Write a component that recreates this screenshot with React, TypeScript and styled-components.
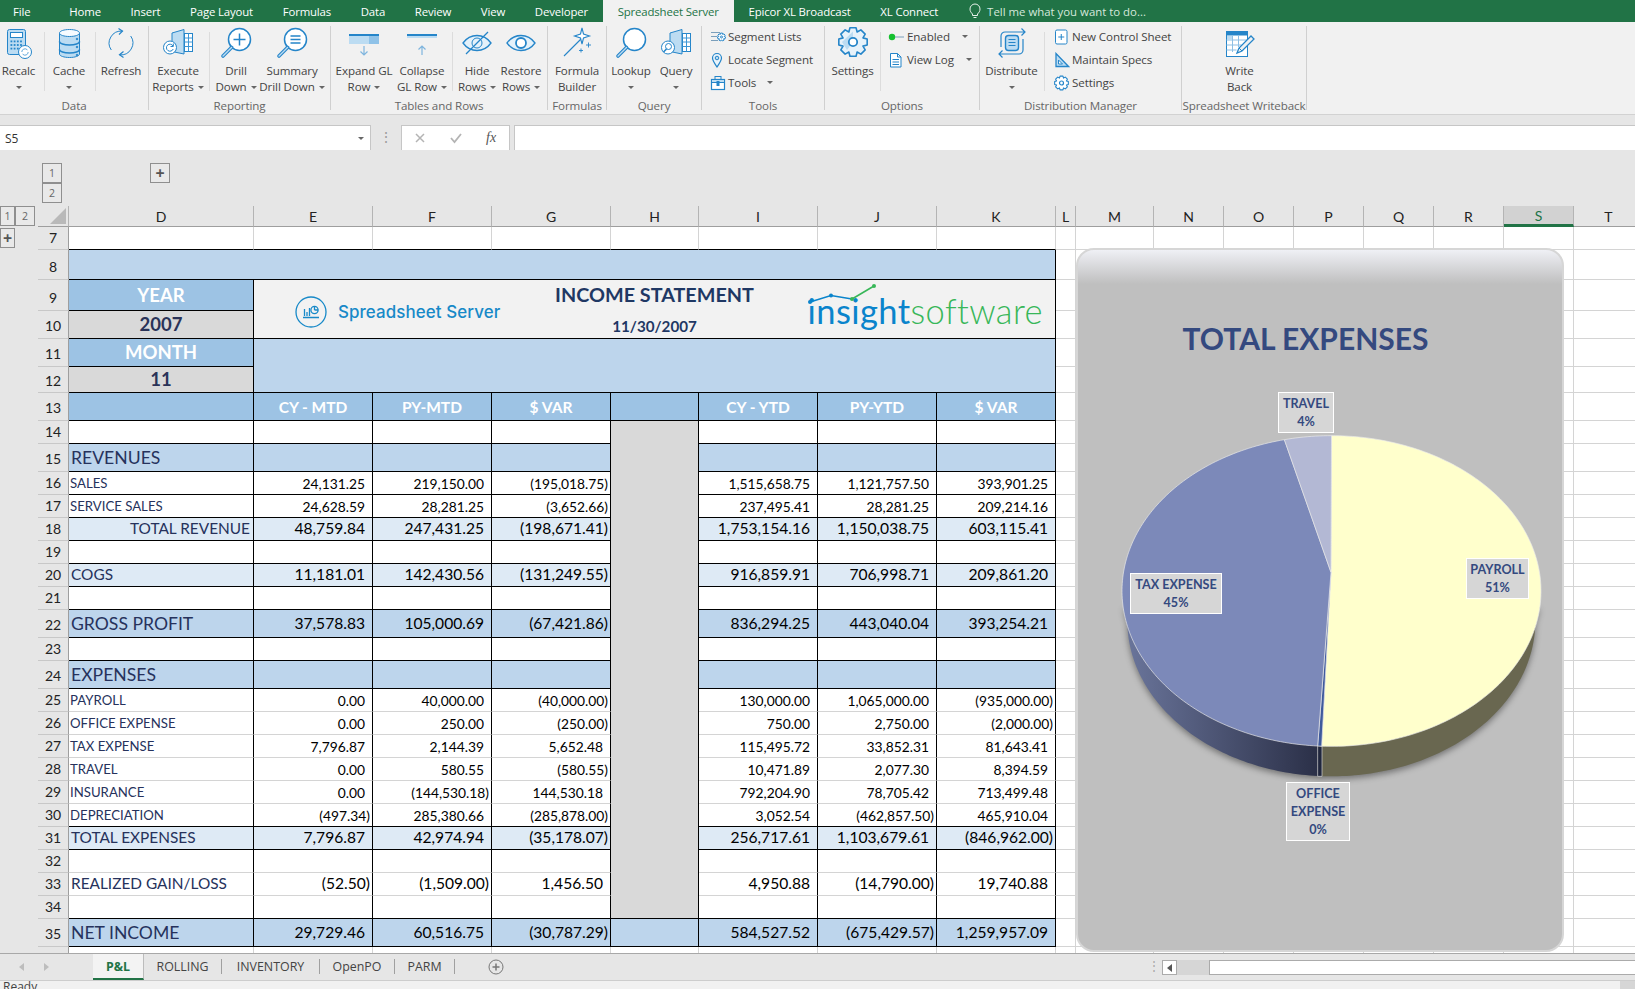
import React, { FC, ReactNode } from "react";
import styled, { createGlobalStyle } from "styled-components";

const BLUE = "#2585c9";
const PALE = "#bcdcf2";
const UI_FONT = `"Open Sans", "Noto Sans", sans-serif`;
const SHEET_FONT = `Lato, "Liberation Sans", sans-serif`;

const GlobalStyle = createGlobalStyle`
  html, body { margin: 0; padding: 0; background: #e6e6e6; overflow: hidden; }
`;

const Page = styled.div`
  width: 1635px;
  height: 989px;
  display: flex;
  flex-direction: column;
  overflow: hidden;
  font-family: ${UI_FONT};
`;

/* ---------- title tabs ---------- */

const TabStrip = styled.div`
  height: 22px;
  flex: none;
  display: flex;
  background: #217346;
  color: #fff;
  font-size: 11.4px;
  letter-spacing: -0.15px;
`;

const MenuTab = styled.div<{ $active?: boolean; $wide?: boolean }>`
  display: flex;
  align-items: center;
  padding: ${(p) => (p.$wide ? "0 24px 0 13px" : "0 14.85px")};
  white-space: nowrap;
  background: ${(p) => (p.$active ? "#f1f1f1" : "transparent")};
  color: ${(p) => (p.$active ? "#217346" : "#fff")};
`;

const TellMe = styled.div`
  display: flex;
  align-items: center;
  gap: 6px;
  margin-left: 16px;
  color: #d5e8dc;
  white-space: nowrap;
  letter-spacing: 0;
`;

/* ---------- ribbon ---------- */

const Ribbon = styled.div`
  height: 92px;
  flex: none;
  display: flex;
  background: #f1f1f1;
  border-bottom: 1px solid #d2d2d2;
  color: #444;
  font-size: 11.6px;
  letter-spacing: -0.1px;
`;

const Group = styled.div<{ $w: number }>`
  width: ${(p) => p.$w}px;
  flex: none;
  display: flex;
  flex-direction: column;
`;

const GroupBody = styled.div<{ $pad?: number }>`
  flex: 1;
  display: flex;
  padding-left: ${(p) => p.$pad ?? 0}px;
  min-height: 0;
`;

const GroupLabel = styled.div`
  height: 16px;
  line-height: 16px;
  text-align: center;
  color: #666;
  white-space: nowrap;
`;

const GroupRule = styled.div`
  width: 1px;
  flex: none;
  margin: 4px 0;
  background: #d0d0d0;
`;

const InnerRule = styled.div<{ $ml?: number }>`
  width: 1px;
  flex: none;
  margin: 10px 0 7px ${(p) => p.$ml ?? 0}px;
  background: #dcdcdc;
`;

const BigBtn = styled.div<{ $w: number }>`
  width: ${(p) => p.$w}px;
  flex: none;
  display: flex;
  flex-direction: column;
  align-items: center;
  padding-top: 5px;
`;

const IconBox = styled.div`
  height: 32px;
  width: 32px;
  margin-bottom: 4px;
`;

const BtnLine = styled.div`
  height: 16px;
  line-height: 16px;
  white-space: nowrap;
  display: flex;
  align-items: center;
  justify-content: center;
`;

const Caret = styled.span<{ $ml?: number }>`
  display: inline-block;
  width: 0;
  height: 0;
  margin-left: ${(p) => p.$ml ?? 4}px;
  border-left: 3px solid transparent;
  border-right: 3px solid transparent;
  border-top: 3px solid #666;
`;

const SmallList = styled.div<{ $ml?: number }>`
  display: flex;
  flex-direction: column;
  padding-top: 3px;
  margin-left: ${(p) => p.$ml ?? 0}px;
`;

const SmallRow = styled.div`
  height: 23px;
  display: flex;
  align-items: center;
  white-space: nowrap;
`;

const SmallIcon = styled.div<{ $w?: number }>`
  width: ${(p) => p.$w ?? 18}px;
  height: 16px;
  flex: none;
`;

/* ---------- formula bar ---------- */

const FormulaBar = styled.div`
  height: 35px;
  flex: none;
  box-sizing: border-box;
  padding-top: 10px;
  display: flex;
  background: #e6e6e6;
  font-size: 12px;
  color: #333;
`;

const NameBox = styled.div`
  width: 371px;
  height: 26px;
  flex: none;
  box-sizing: border-box;
  display: flex;
  align-items: center;
  justify-content: space-between;
  padding: 0 6px 0 5px;
  background: #fff;
  border: 1px solid #c6c6c6;
  border-left: none;
`;

const BarDots = styled.div`
  width: 30px;
  flex: none;
  color: #9c9c9c;
  text-align: center;
  line-height: 24px;
  font-size: 14px;
`;

const FxButtons = styled.div`
  width: 109px;
  height: 26px;
  flex: none;
  box-sizing: border-box;
  display: flex;
  align-items: center;
  gap: 23px;
  padding-left: 12px;
  background: #fff;
  border: 1px solid #c6c6c6;
`;

const FormulaInput = styled.div`
  flex: 1;
  height: 26px;
  box-sizing: border-box;
  margin-left: 4px;
  background: #fff;
  border: 1px solid #c6c6c6;
  border-right: none;
`;

const FxGlyph = styled.span`
  font-family: "Liberation Serif", serif;
  font-style: italic;
  font-size: 14px;
  color: #555;
`;

const OutlineBand = styled.div`
  height: 56px;
  flex: none;
  box-sizing: border-box;
  padding: 13px 0 0 42px;
  display: flex;
  align-items: flex-start;
  background: #e6e6e6;
`;

const LevelStack = styled.div`
  display: flex;
  flex-direction: column;
  margin-right: 88px;
`;

const LevelBtn = styled.div<{ $w?: number; $plus?: boolean }>`
  width: ${(p) => p.$w ?? 20}px;
  height: 20px;
  box-sizing: border-box;
  display: flex;
  align-items: center;
  justify-content: center;
  border: 1px solid #8f8f8f;
  color: ${(p) => (p.$plus ? "#555" : "#666")};
  font-size: ${(p) => (p.$plus ? "16px" : "10.5px")};
  font-weight: ${(p) => (p.$plus ? 700 : 400)};
  background: #e9e9e9;
`;

/* ---------- sheet ---------- */

const SheetArea = styled.div`
  position: relative;
  flex: 1;
  min-height: 0;
  display: flex;
  overflow: hidden;
  background: #fff;
`;

const Gutter = styled.div`
  width: 38px;
  flex: none;
  background: #e6e6e6;
`;

const LevelRow = styled.div`
  display: flex;
  margin-bottom: 2px;
`;

const COLUMNS = ["D", "E", "F", "G", "H", "I", "J", "K", "L", "M", "N", "O", "P", "Q", "R", "S", "T"];
const WIDTHS = [185, 119, 119, 119, 88, 119, 119, 119, 20, 78, 70, 70, 70, 70, 70, 70, 70];

const Grid = styled.div`
  display: grid;
  grid-template-columns: 31px ${WIDTHS.map((w) => `${w}px`).join(" ")};
  grid-auto-rows: min-content;
  font-family: ${SHEET_FONT};
  color: #000;
  align-content: start;
`;

const ColHead = styled.div<{ $selected?: boolean }>`
  height: 21px;
  box-sizing: border-box;
  display: flex;
  align-items: center;
  justify-content: center;
  background: ${(p) => (p.$selected ? "#d2d2d2" : "#e6e6e6")};
  color: ${(p) => (p.$selected ? "#217346" : "#222")};
  border-right: 1px solid #b4b4b4;
  border-bottom: ${(p) => (p.$selected ? "3px solid #217346" : "1px solid #9e9e9e")};
  font-size: 14px;
`;

const Corner = styled.div`
  height: 21px;
  box-sizing: border-box;
  background: #e6e6e6;
  border-right: 1px solid #b4b4b4;
  border-bottom: 1px solid #9e9e9e;
  display: flex;
  align-items: flex-end;
  justify-content: flex-end;
  padding: 0 2px 2px 0;
`;

const RowHead = styled.div<{ $h: number }>`
  height: ${(p) => p.$h}px;
  box-sizing: border-box;
  display: flex;
  align-items: flex-end;
  justify-content: center;
  padding-bottom: ${(p) => (p.$h >= 28 ? 5 : 4)}px;
  background: #e6e6e6;
  border-right: 1px solid #9e9e9e;
  border-bottom: 1px solid #c8c8c8;
  color: #222;
  font-size: 14px;
  line-height: 1;
`;

const Cell = styled.div<{
  $fill?: string;
  $bottom?: string;
  $right?: string;
  $span?: number;
  $rows?: number;
}>`
  box-sizing: border-box;
  min-width: 0;
  display: flex;
  align-items: flex-end;
  white-space: nowrap;
  line-height: 1;
  background: ${(p) => p.$fill ?? "#fff"};
  border-right: 1px solid ${(p) => p.$right ?? "#000"};
  border-bottom: 1px solid ${(p) => p.$bottom ?? "#000"};
  grid-column: span ${(p) => p.$span ?? 1};
  grid-row: span ${(p) => p.$rows ?? 1};
`;

const BandCell = styled(Cell)`
  justify-content: center;
  align-items: center;
  font-weight: 700;
`;

const HeadCell = styled(BandCell)`
  color: #fff;
  font-size: 15.5px;
  padding-top: 2px;
`;

const YearLabel = styled(BandCell)`
  color: #fff;
  font-size: 18.5px;
`;

const YearValue = styled(BandCell)`
  color: #2a3358;
  font-size: 18.5px;
`;

const LabelCell = styled(Cell)<{ $size: number; $alignRight?: boolean }>`
  font-size: ${(p) => p.$size}px;
  color: #26325c;
  padding: 0 3px 4px ${(p) => (p.$size > 14 ? 2 : 1)}px;
  justify-content: ${(p) => (p.$alignRight ? "flex-end" : "flex-start")};
`;

const NumberCell = styled(Cell)<{ $big?: boolean; $paren?: boolean; $tall?: boolean }>`
  font-size: ${(p) => (p.$big ? 15.6 : 13.8)}px;
  padding: 0 ${(p) => (p.$paren ? 2 : 7)}px ${(p) => (p.$tall ? 5 : 3)}px 0;
  justify-content: flex-end;
  font-variant-numeric: tabular-nums;
`;

const Banner = styled(Cell)`
  display: grid;
  grid-template-columns: 1fr auto 1fr;
  align-items: stretch;
`;

const TitleBlock = styled.div`
  height: 58px;
  display: flex;
  flex-direction: column;
  align-items: center;
  color: #1f3864;
  font-weight: 700;
`;

const Title = styled.div`
  font-size: 19.8px;
  line-height: 29px;
`;

const DateLine = styled.div`
  font-size: 15.2px;
  line-height: 34px;
`;

const ServerBrand = styled.div`
  display: flex;
  align-items: center;
  gap: 11px;
  padding: 6px 0 0 41px;
  color: #1789c8;
  font-family: Inter, sans-serif;
  font-size: 16.9px;
  font-weight: 500;
  letter-spacing: 0.1px;
`;

const InsightBrand = styled.div`
  position: relative;
  justify-self: end;
  padding: 15px 12px 0 0;
  font-family: ${SHEET_FONT};
  font-size: 34.5px;
  line-height: 32px;
  letter-spacing: 0.4px;
`;

const InsightWord = styled.span`
  color: #0a84cc;
  font-weight: 400;
`;

const SoftwareWord = styled.span`
  color: #38b759;
  font-weight: 300;
`;

const InsightTrend = styled.svg`
  position: absolute;
  left: 0;
  top: 4px;
`;

/* ---------- chart ---------- */

const ChartPanel = styled.div`
  position: absolute;
  left: 1076px;
  top: 42px;
  width: 488px;
  height: 704px;
  box-sizing: border-box;
  border: 2px solid #d6d6d6;
  border-radius: 18px;
  background: linear-gradient(#eff0f5 0, #bfbfbf 34px);
  font-family: ${SHEET_FONT};
`;

const ChartTitle = styled.div`
  padding-top: 70px;
  text-align: center;
  margin-right: 29px;
  color: #34497f;
  font-size: 30px;
  line-height: 36px;
  font-weight: 700;
`;

const PieSvg = styled.svg`
  position: absolute;
  left: 22px;
  top: 179px;
`;

const DataLabel = styled.div<{ $x: number; $y: number; $w: number; $h: number }>`
  position: absolute;
  left: ${(p) => p.$x}px;
  top: ${(p) => p.$y}px;
  width: ${(p) => p.$w}px;
  height: ${(p) => p.$h}px;
  box-sizing: border-box;
  display: flex;
  align-items: center;
  justify-content: center;
  text-align: center;
  background: #d6d6d6;
  border: 1px solid #fff;
  color: #34497f;
  font-size: 12.6px;
  font-weight: 700;
  line-height: 18px;
`;

/* ---------- sheet tabs + status ---------- */

const SheetTabs = styled.div`
  height: 28px;
  flex: none;
  box-sizing: border-box;
  display: flex;
  align-items: stretch;
  background: #e6e6e6;
  border-top: 1px solid #a8a8a8;
  border-bottom: 1px solid #cdcdcd;
  font-size: 12.4px;
  color: #444;
`;

const TabNav = styled.div`
  width: 93px;
  flex: none;
  display: flex;
  align-items: center;
  gap: 20px;
  padding-left: 19px;
  box-sizing: border-box;
`;

const NavArrow = styled.span<{ $dir: "left" | "right" }>`
  width: 0;
  height: 0;
  border-top: 4px solid transparent;
  border-bottom: 4px solid transparent;
  border-${(p) => (p.$dir === "left" ? "right" : "left")}: 5px solid #bdbdbd;
`;

const SheetTab = styled.div<{ $active?: boolean; $w: number }>`
  width: ${(p) => p.$w}px;
  flex: none;
  box-sizing: border-box;
  display: flex;
  align-items: center;
  justify-content: center;
  background: ${(p) => (p.$active ? "#f3f3f3" : "transparent")};
  color: ${(p) => (p.$active ? "#217346" : "#444")};
  font-weight: ${(p) => (p.$active ? 700 : 400)};
  border-bottom: ${(p) => (p.$active ? "2px solid #217346" : "none")};
  margin: ${(p) => (p.$active ? "0" : "5px 0 6px")};
  border-right: ${(p) => (p.$active ? "1px solid #bcbcbc" : "1px solid #a0a0a0")};
`;

const AddSheet = styled.div`
  margin-left: 33px;
  align-self: center;
  display: flex;
`;

const TabFiller = styled.div`
  flex: 1;
`;

const ScrollDots = styled.div`
  width: 16px;
  flex: none;
  text-align: center;
  color: #a8a8a8;
  line-height: 24px;
`;

const HScroll = styled.div`
  flex: none;
  width: 473px;
  height: 15px;
  margin-top: 6px;
  display: flex;
  box-sizing: border-box;
`;

const HScrollBtn = styled.div`
  width: 15px;
  flex: none;
  box-sizing: border-box;
  background: #fff;
  border: 1px solid #ababab;
  display: flex;
  align-items: center;
  justify-content: center;
`;

const HScrollTrack = styled.div`
  width: 32px;
  flex: none;
  background: #d6d6d6;
`;

const HScrollThumb = styled.div`
  flex: 1;
  box-sizing: border-box;
  background: #fff;
  border: 1px solid #ababab;
  border-right: none;
`;

const StatusBar = styled.div`
  height: 8px;
  flex: none;
  display: flex;
  justify-content: space-between;
  padding-left: 3px;
  background: #f1f1f1;
  color: #444;
  font-size: 12px;
  line-height: 12px;
  overflow: hidden;
`;

const StatusBox = styled.div`
  width: 15px;
  background: #d6d6d6;
`;

/* ---------- icons ---------- */

const Svg: FC<{ children: ReactNode; size?: number; box?: number }> = ({ children, size = 32, box = 32 }) => (
  <svg width={size} height={size} viewBox={`0 0 ${box} ${box}`} fill="none" stroke={BLUE} strokeWidth={1}>
    {children}
  </svg>
);

const gearPath = (cx: number, cy: number, outer: number, inner: number, teeth: number) => {
  const pts: string[] = [];
  const step = (Math.PI * 2) / teeth;
  for (let i = 0; i < teeth; i++) {
    const a = i * step - Math.PI / 2;
    [
      [inner, -0.5],
      [outer, -0.27],
      [outer, 0.27],
      [inner, 0.5],
    ].forEach(([r, k]) => {
      const t = a + k * step;
      pts.push(`${(cx + r * Math.cos(t)).toFixed(2)},${(cy + r * Math.sin(t)).toFixed(2)}`);
    });
  }
  return `M${pts.join("L")}Z`;
};

const CalcIcon = () => (
  <Svg>
    <rect x="4.5" y="2.5" width="18" height="25" rx="2" fill={PALE} />
    <rect x="7.5" y="5.5" width="12" height="5" fill="#fff" />
    {[0, 1, 2].map((r) =>
      [0, 1, 2, 3].map((c) => (
        <rect key={`${r}${c}`} x={7.5 + c * 3.2} y={13.5 + r * 3.6} width="1.8" height="1.8" fill={BLUE} stroke="none" />
      ))
    )}
    <circle cx="22" cy="25" r="6.5" fill="#fff" />
    <path d="M18.8 25a3.2 3.2 0 0 1 5.6-2.1M25.2 25a3.2 3.2 0 0 1-5.6 2.1" stroke="#62a8db" />
  </Svg>
);

const CacheIcon = () => (
  <Svg>
    <path d="M6.5 6v21c0 2 4.500 3.500 10 3.500s10-1.500 10-3.500V6" fill={PALE} />
    <path d="M6.500 6c0 2 4.500 3.500 10 3.500S26.500 8 26.500 6 22 2.500 16.500 2.500 6.500 4 6.500 6z" fill="#f6fbff" />
    <path d="M6.500 14.500c0 2 4.500 3.500 10 3.500s10-1.500 10-3.500M6.500 22.500c0 2 4.500 3.500 10 3.500s10-1.500 10-3.500" strokeWidth="1.6" />
    <circle cx="24" cy="12" r=".8" fill={BLUE} />
    <circle cx="24" cy="20" r=".8" fill={BLUE} />
    <circle cx="24" cy="28" r=".8" fill={BLUE} />
  </Svg>
);

const RefreshIcon = () => (
  <Svg>
    <path d="M6.300 23A12 12 0 0 1 17.500 4.200M25.700 9A12 12 0 0 1 14.500 27.800" />
    <path d="M13.500 1.500l4 2.700-3.500 3.300M18.500 24.500l-4 3.300 4 2.700" strokeWidth="1.200" />
  </Svg>
);

const SheetDocIcon = ({ lens }: { lens?: boolean }) => (
  <Svg>
    <path d="M10 6l12-3.500V27l-12-2.500z" fill={PALE} />
    <rect x="22.500" y="6.500" width="8" height="18" fill="#fff" />
    <path d="M22.500 11h8M22.500 15h8M22.500 19.500h8M26.500 6.500v18" stroke="#3d96d6" />
    <circle cx="8" cy="20.500" r="6.500" fill="#fff" />
    {lens ? (
      <>
        <circle cx="8.500" cy="19.500" r="3" />
        <path d="M6.500 22l-3 3" strokeWidth="1.600" />
      </>
    ) : (
      <path d="M11 19a3.500 3.500 0 1 0 .200 3M11.300 16.500V19.500H8.500" />
    )}
  </Svg>
);

const LensIcon = ({ children }: { children?: ReactNode }) => (
  <Svg>
    <circle cx="19.500" cy="12.500" r="11" fill="#fff" strokeWidth="1.500" />
    <path d="M11.500 20.500L3 29" stroke={BLUE} strokeWidth="3.600" strokeLinecap="round" />
    <path d="M11.500 20.500L3 29" stroke={PALE} strokeWidth="1.400" strokeLinecap="round" />
    {children}
  </Svg>
);

const ExpandIcon = () => (
  <Svg>
    <rect x="1" y="8" width="30" height="9" fill={PALE} stroke="none" />
    <rect x="21" y="9" width="10" height="8" fill="#8fc2e8" stroke="none" />
    <rect x="1" y="7" width="30" height="2" fill={BLUE} stroke="none" />
    <path d="M16 19v9M12.500 24.500L16 28l3.500-3.500" stroke="#7fb5de" strokeWidth="1.200" />
  </Svg>
);

const CollapseIcon = () => (
  <Svg>
    <rect x="1" y="9" width="30" height="2" fill={PALE} stroke="none" />
    <rect x="1" y="7" width="30" height="2" fill={BLUE} stroke="none" />
    <path d="M16 19v9M12.500 22.500L16 19l3.500 3.500" stroke="#7fb5de" strokeWidth="1.200" />
  </Svg>
);

const EyeIcon = ({ slash }: { slash?: boolean }) => (
  <Svg>
    <path d="M2 16C6 10.500 11 8.500 16 8.500S26 10.500 30 16c-4 5.500-9 7.500-14 7.500S6 21.500 2 16z" fill="#e4f1fa" strokeWidth="1.300" />
    <circle cx="16" cy="16" r="5" fill={slash ? "#e4f1fa" : "#fff"} strokeWidth={slash ? 1 : 1.800} />
    {slash && <path d="M27 5L5 27" strokeWidth="1.300" />}
  </Svg>
);

const WandIcon = () => (
  <Svg>
    <path d="M3 29L21 11" strokeWidth="1.100" />
    <path d="M21 1l1.500 6 6 2-6 2-1.500 6-1.500-6-6-2 6-2z" fill="#fff" strokeWidth="1.100" />
    <path d="M27.500 15.500v5M25 18h5M20 21.500v4M18 23.500h4" strokeWidth=".9" />
  </Svg>
);

const GearIcon = () => (
  <Svg>
    <path d={gearPath(16, 15, 14.500, 10.800, 8)} fill="#e7f2fa" strokeWidth="1.600" strokeLinejoin="round" />
    <path d="M16 4.500L5 15l5 8 6-8z" fill={PALE} stroke="none" />
    <circle cx="16" cy="15" r="4.200" fill="#fff" strokeWidth="1.800" />
  </Svg>
);

const DistributeIcon = () => (
  <Svg>
    <rect x="9.500" y="8.500" width="13" height="15" rx="3" fill={PALE} strokeWidth="1.400" />
    <path d="M12.500 12.500h7M12.500 15.500h7M12.500 18.500h7" strokeWidth="1.200" />
    <path d="M5 20V9a4 4 0 0 1 4-4h20M25.500 1.500L29 5l-3.500 3.500" strokeWidth="1.200" />
    <path d="M27 12v11a4 4 0 0 1-4 4H3M6.500 30.500L3 27l3.500-3.500" strokeWidth="1.200" />
  </Svg>
);

const WriteBackIcon = () => (
  <Svg>
    <rect x="2.500" y="4.500" width="21" height="25" fill="#fff" />
    <rect x="2" y="4" width="22" height="4.500" fill={BLUE} stroke="none" />
    <path d="M2.500 13h21M2.500 18h15M2.500 23h10M8.500 8.500V25M14.500 8.500V20" stroke="#8dbfe4" />
    <rect x="3" y="9" width="5" height="4" fill={PALE} stroke="none" />
    <path d="M13 26l2-5L27 9l3 3-12 12z" fill="#f1f1f1" strokeWidth="1.300" />
    <path d="M15 21l3 3" strokeWidth="1" />
  </Svg>
);

const SegListIcon = () => (
  <Svg size={16} box={16}>
    <path d="M1 3.500h9M1 7.500h6M1 11.500h7" stroke="#7b9fbb" />
    <path d={gearPath(11.500, 8, 4, 2.800, 7)} fill="#fff" />
    <circle cx="11.500" cy="8" r="1" />
  </Svg>
);

const PinIcon = () => (
  <Svg size={16} box={16}>
    <path d="M7 15C4 10.500 2.500 8.500 2.500 6a4.500 4.500 0 0 1 9 0c0 2.500-1.500 4.500-4.500 9z" fill="#eaf4fb" strokeWidth="1.200" />
    <circle cx="7" cy="6" r="1.800" fill={PALE} />
  </Svg>
);

const ToolsIcon = () => (
  <Svg size={16} box={16}>
    <rect x="1.500" y="4.500" width="13" height="10" fill="#fff" strokeWidth="1.200" />
    <rect x="5" y="1.500" width="6" height="3" />
    <rect x="1.500" y="4.500" width="13" height="3" fill={PALE} />
    <rect x="6.500" y="6" width="3" height="5" fill={BLUE} stroke="none" />
  </Svg>
);

const EnabledIcon = () => (
  <Svg size={16} box={16}>
    <path d="M6 8h10" stroke="#7b9fbb" />
    <circle cx="4" cy="8" r="3.200" fill="#16c02f" stroke="none" />
  </Svg>
);

const LogIcon = () => (
  <Svg size={16} box={16}>
    <path d="M2.500 1.500h7l3.500 3.500v10h-10.500z" fill="#fff" />
    <path d="M9.500 1.500V5H13M4.500 7.500h6.500M4.500 10h6.500M4.500 12.500h6.500" />
  </Svg>
);

const ControlIcon = () => (
  <Svg size={16} box={16}>
    <rect x="1.500" y="1" width="11.500" height="14" rx="1.500" fill="#fff" />
    <path d="M7.250 5v6M4.250 8h6" />
  </Svg>
);

const RulerIcon = () => (
  <Svg size={16} box={16}>
    <path d="M2 1.500v13h12.500z" fill={PALE} strokeWidth="1.300" />
    <path d="M4.500 8v4h4z" fill="#fff" />
  </Svg>
);

const SmallGearIcon = () => (
  <Svg size={16} box={16}>
    <path d={gearPath(7.500, 8, 7, 5.300, 8)} fill="#fff" strokeWidth="1.100" strokeLinejoin="round" />
    <circle cx="7.500" cy="8" r="2" strokeWidth="1.200" />
  </Svg>
);

const BulbIcon = () => (
  <svg width="12" height="16" viewBox="0 0 12 16" fill="none" stroke="#e6f1ea" strokeWidth="1">
    <path d="M3.500 11C2 9.500 1 8.300 1 6a5 5 0 0 1 10 0c0 2.300-1 3.500-2.500 5v1.500h-5z" />
    <path d="M4.500 14.500h3" />
  </svg>
);

const RibbonButton: FC<{
  w: number;
  icon: ReactNode;
  line1: string;
  line2?: string;
  caret?: boolean;
}> = ({ w, icon, line1, line2, caret }) => (
  <BigBtn $w={w}>
    <IconBox>{icon}</IconBox>
    <BtnLine>{line1}</BtnLine>
    <BtnLine>
      {line2}
      {caret && <Caret $ml={line2 ? 4 : 0} />}
    </BtnLine>
  </BigBtn>
);

/* ---------- sheet data ---------- */

type RowKind = "line" | "total" | "section" | "blank" | "plainBig";

interface IRow {
  n: number;
  kind: RowKind;
  label?: string;
  right?: boolean;
  rule?: "grid";
  values?: string[];
}

const ROW_BLUE = "#bdd5ec";
const HEAD_BLUE = "#9dc3e4";
const GREY = "#d9d9d9";
const PALE_ROW = "#deeaf5";
const GRID = "#d4d4d4";

const HEIGHTS: Record<RowKind, number> = { line: 23, blank: 23, plainBig: 23, total: 23, section: 28 };

const rows: IRow[] = [
  { n: 15, kind: "section", label: "REVENUES" },
  { n: 16, kind: "line", label: "SALES", values: ["24,131.25", "219,150.00", "(195,018.75)", "1,515,658.75", "1,121,757.50", "393,901.25"] },
  { n: 17, kind: "line", label: "SERVICE SALES", values: ["24,628.59", "28,281.25", "(3,652.66)", "237,495.41", "28,281.25", "209,214.16"] },
  { n: 18, kind: "total", label: "TOTAL REVENUE", right: true, values: ["48,759.84", "247,431.25", "(198,671.41)", "1,753,154.16", "1,150,038.75", "603,115.41"] },
  { n: 19, kind: "blank" },
  { n: 20, kind: "total", label: "COGS", values: ["11,181.01", "142,430.56", "(131,249.55)", "916,859.91", "706,998.71", "209,861.20"] },
  { n: 21, kind: "blank" },
  { n: 22, kind: "section", label: "GROSS PROFIT", values: ["37,578.83", "105,000.69", "(67,421.86)", "836,294.25", "443,040.04", "393,254.21"] },
  { n: 23, kind: "blank" },
  { n: 24, kind: "section", label: "EXPENSES" },
  { n: 25, kind: "line", rule: "grid", label: "PAYROLL", values: ["0.00", "40,000.00", "(40,000.00)", "130,000.00", "1,065,000.00", "(935,000.00)"] },
  { n: 26, kind: "line", rule: "grid", label: "OFFICE EXPENSE", values: ["0.00", "250.00", "(250.00)", "750.00", "2,750.00", "(2,000.00)"] },
  { n: 27, kind: "line", rule: "grid", label: "TAX EXPENSE", values: ["7,796.87", "2,144.39", "5,652.48", "115,495.72", "33,852.31", "81,643.41"] },
  { n: 28, kind: "line", rule: "grid", label: "TRAVEL", values: ["0.00", "580.55", "(580.55)", "10,471.89", "2,077.30", "8,394.59"] },
  { n: 29, kind: "line", rule: "grid", label: "INSURANCE", values: ["0.00", "(144,530.18)", "144,530.18", "792,204.90", "78,705.42", "713,499.48"] },
  { n: 30, kind: "line", label: "DEPRECIATION", values: ["(497.34)", "285,380.66", "(285,878.00)", "3,052.54", "(462,857.50)", "465,910.04"] },
  { n: 31, kind: "total", label: "TOTAL EXPENSES", values: ["7,796.87", "42,974.94", "(35,178.07)", "256,717.61", "1,103,679.61", "(846,962.00)"] },
  { n: 32, kind: "blank", rule: "grid" },
  { n: 33, kind: "plainBig", rule: "grid", label: "REALIZED GAIN/LOSS", values: ["(52.50)", "(1,509.00)", "1,456.50", "4,950.88", "(14,790.00)", "19,740.88"] },
  { n: 34, kind: "blank" },
  { n: 35, kind: "section", label: "NET INCOME", values: ["29,729.46", "60,516.75", "(30,787.29)", "584,527.52", "(675,429.57)", "1,259,957.09"] },
];

const rowFill = (kind: RowKind) => (kind === "section" ? ROW_BLUE : kind === "total" ? PALE_ROW : "#fff");
const labelSize = (row: IRow) => {
  if (row.kind === "section") return 17.6;
  if (row.kind === "total" || row.kind === "plainBig") return 15.4;
  return 13.2;
};

const Tail: FC<{ n: number }> = ({ n }) => (
  <>
    {COLUMNS.slice(8).map((c) => (
      <Cell key={c + n} $right={GRID} $bottom={GRID} />
    ))}
  </>
);

const BodyRow: FC<{ row: IRow }> = ({ row }) => {
  const fill = rowFill(row.kind);
  const bottom = row.rule === "grid" ? GRID : "#000";
  const big = row.kind !== "line";
  const values = row.values ?? ["", "", "", "", "", ""];
  const numberCell = (v: string, i: number) => (
    <NumberCell key={i} $fill={fill} $bottom={bottom} $big={big} $tall={row.kind === "section"} $paren={v.endsWith(")")}>
      {v}
    </NumberCell>
  );
  return (
    <>
      <RowHead $h={HEIGHTS[row.kind]}>{row.n}</RowHead>
      <LabelCell $fill={fill} $bottom={bottom} $size={labelSize(row)} $alignRight={row.right}>
        {row.label}
      </LabelCell>
      {values.slice(0, 3).map(numberCell)}
      {row.n === 35 && <Cell $fill={ROW_BLUE} />}
      {values.slice(3).map((v, i) => numberCell(v, i + 3))}
      <Tail n={row.n} />
    </>
  );
};

/* pie outline sampled on an ellipse: t runs clockwise from the top */
const arcPoints = (cx: number, cy: number, rx: number, ry: number, from: number, to: number) => {
  const steps = Math.max(2, Math.ceil(Math.abs(to - from) / 0.02));
  const pts: string[] = [];
  for (let i = 0; i <= steps; i++) {
    const t = from + ((to - from) * i) / steps;
    pts.push(`${(cx + rx * Math.sin(t)).toFixed(1)} ${(cy - ry * Math.cos(t)).toFixed(1)}`);
  }
  return pts.join("L");
};

const topArc = (from: number, to: number) => arcPoints(874.5, 516, 628.5, 466, from, to);
const baseArc = (from: number, to: number) => arcPoints(874, 606, 612, 466, from, to);

const PI = Math.PI;
const wedges = [
  { d: `M873 460L${topArc(0, PI + 0.047)}Z`, fill: "#ffffcc" },
  { d: `M873 460L${topArc(PI + 0.047, PI + 0.0663)}Z`, fill: "#3f5a9c" },
  { d: `M873 460L${topArc(PI + 0.0663, 2 * PI - 0.227)}Z`, fill: "#7c89b9" },
  { d: `M873 460L${topArc(2 * PI - 0.227, 2 * PI)}Z`, fill: "#b3b8d4" },
];

const App: FC = () => (
  <Page>
    <GlobalStyle />
    <TabStrip>
      <MenuTab $wide>File</MenuTab>
      {["Home", "Insert", "Page Layout", "Formulas", "Data", "Review", "View", "Developer"].map((t) => (
        <MenuTab key={t}>{t}</MenuTab>
      ))}
      <MenuTab $active>Spreadsheet Server</MenuTab>
      <MenuTab>Epicor XL Broadcast</MenuTab>
      <MenuTab>XL Connect</MenuTab>
      <TellMe>
        <BulbIcon />
        Tell me what you want to do...
      </TellMe>
    </TabStrip>

    <Ribbon>
      <Group $w={148}>
        <GroupBody>
          <RibbonButton w={37} icon={<CalcIcon />} line1="Recalc" caret />
          <InnerRule $ml={7} />
          <RibbonButton w={48} icon={<CacheIcon />} line1="Cache" caret />
          <InnerRule $ml={2} />
          <RibbonButton w={50} icon={<RefreshIcon />} line1="Refresh" />
        </GroupBody>
        <GroupLabel>Data</GroupLabel>
      </Group>
      <GroupRule />
      <Group $w={181}>
        <GroupBody>
          <RibbonButton w={58} icon={<SheetDocIcon />} line1="Execute" line2="Reports" caret />
          <InnerRule $ml={2} />
          <RibbonButton w={52} icon={<LensIcon><path d="M19.500 6.500v12M13.500 12.500h12" strokeWidth="1.500" /></LensIcon>} line1="Drill" line2="Down" caret />
          <RibbonButton w={60} icon={<LensIcon><path d="M14.500 9h10M14.500 12.500h10M14.500 16h10" strokeWidth="1.500" /></LensIcon>} line1="Summary" line2="Drill Down" caret />
        </GroupBody>
        <GroupLabel>Reporting</GroupLabel>
      </Group>
      <GroupRule />
      <Group $w={216}>
        <GroupBody $pad={5}>
          <RibbonButton w={56} icon={<ExpandIcon />} line1="Expand GL" line2="Row" caret />
          <RibbonButton w={60} icon={<CollapseIcon />} line1="Collapse" line2="GL Row" caret />
          <InnerRule />
          <RibbonButton w={48} icon={<EyeIcon slash />} line1="Hide" line2="Rows" caret />
          <RibbonButton w={40} icon={<EyeIcon />} line1="Restore" line2="Rows" caret />
        </GroupBody>
        <GroupLabel>Tables and Rows</GroupLabel>
      </Group>
      <GroupRule />
      <Group $w={58}>
        <GroupBody>
          <RibbonButton w={58} icon={<WandIcon />} line1="Formula" line2="Builder" />
        </GroupBody>
        <GroupLabel>Formulas</GroupLabel>
      </Group>
      <GroupRule />
      <Group $w={94}>
        <GroupBody>
          <RibbonButton w={48} icon={<LensIcon />} line1="Lookup" caret />
          <RibbonButton w={42} icon={<SheetDocIcon lens />} line1="Query" caret />
        </GroupBody>
        <GroupLabel>Query</GroupLabel>
      </Group>
      <GroupRule />
      <Group $w={122}>
        <GroupBody $pad={8}>
          <SmallList>
            <SmallRow><SmallIcon><SegListIcon /></SmallIcon>Segment Lists</SmallRow>
            <SmallRow><SmallIcon><PinIcon /></SmallIcon>Locate Segment</SmallRow>
            <SmallRow><SmallIcon><ToolsIcon /></SmallIcon>Tools<Caret $ml={11} /></SmallRow>
          </SmallList>
        </GroupBody>
        <GroupLabel>Tools</GroupLabel>
      </Group>
      <GroupRule />
      <Group $w={154}>
        <GroupBody>
          <RibbonButton w={55} icon={<GearIcon />} line1="Settings" />
          <InnerRule />
          <SmallList $ml={7}>
            <SmallRow><SmallIcon $w={19}><EnabledIcon /></SmallIcon>Enabled<Caret $ml={12} /></SmallRow>
            <SmallRow><SmallIcon $w={19}><LogIcon /></SmallIcon>View Log<Caret $ml={12} /></SmallRow>
          </SmallList>
        </GroupBody>
        <GroupLabel>Options</GroupLabel>
      </Group>
      <GroupRule />
      <Group $w={201}>
        <GroupBody>
          <RibbonButton w={63} icon={<DistributeIcon />} line1="Distribute" caret />
          <InnerRule $ml={1} />
          <SmallList $ml={9}>
            <SmallRow><SmallIcon><ControlIcon /></SmallIcon>New Control Sheet</SmallRow>
            <SmallRow><SmallIcon><RulerIcon /></SmallIcon>Maintain Specs</SmallRow>
            <SmallRow><SmallIcon><SmallGearIcon /></SmallIcon>Settings</SmallRow>
          </SmallList>
        </GroupBody>
        <GroupLabel>Distribution Manager</GroupLabel>
      </Group>
      <GroupRule />
      <Group $w={124}>
        <GroupBody>
          <RibbonButton w={115} icon={<WriteBackIcon />} line1="Write" line2="Back" />
        </GroupBody>
        <GroupLabel>Spreadsheet Writeback</GroupLabel>
      </Group>
      <GroupRule />
    </Ribbon>

    <FormulaBar>
      <NameBox>
        S5
        <Caret />
      </NameBox>
      <BarDots>⋮</BarDots>
      <FxButtons>
        <svg width="12" height="12" viewBox="0 0 12 12" stroke="#b4b4b4" strokeWidth="1.500"><path d="M2 2l8 8M10 2l-8 8" /></svg>
        <svg width="14" height="12" viewBox="0 0 14 12" stroke="#b4b4b4" strokeWidth="1.800" fill="none"><path d="M2 6l3.500 4L12 2" /></svg>
        <FxGlyph>fx</FxGlyph>
      </FxButtons>
      <FormulaInput />
    </FormulaBar>

    <OutlineBand>
      <LevelStack>
        <LevelBtn>1</LevelBtn>
        <LevelBtn>2</LevelBtn>
      </LevelStack>
      <LevelBtn $plus>+</LevelBtn>
    </OutlineBand>

    <SheetArea>
      <Gutter>
        <LevelRow>
          <LevelBtn $w={15}>1</LevelBtn>
          <LevelBtn>2</LevelBtn>
        </LevelRow>
        <LevelBtn $w={15} $plus>+</LevelBtn>
      </Gutter>
      <Grid>
        <Corner>
          <svg width="16" height="16" viewBox="0 0 16 16"><path d="M16 0V16H0z" fill="#b9b9b9" /></svg>
        </Corner>
        {COLUMNS.map((c) => (
          <ColHead key={c} $selected={c === "S"}>{c}</ColHead>
        ))}

        <RowHead $h={23}>7</RowHead>
        {COLUMNS.slice(0, 8).map((c) => (
          <Cell key={c} $right={GRID} />
        ))}
        <Tail n={7} />

        <RowHead $h={30}>8</RowHead>
        <Cell $span={8} $fill={ROW_BLUE} />
        <Tail n={8} />

        <RowHead $h={31}>9</RowHead>
        <YearLabel $fill={HEAD_BLUE}>YEAR</YearLabel>
        <Banner $span={7} $rows={2} $fill="#f2f2f2">
          <ServerBrand>
            <svg width="32" height="32" viewBox="0 0 32 32" fill="none" stroke="#1789c8" strokeWidth="1.300">
              <circle cx="16" cy="16" r="15" />
              <path d="M8 21.500h16M9.500 20v-7M12 20v-4M14.500 20v-8" />
              <circle cx="19.500" cy="14" r="3.600" />
              <path d="M19.500 14v-3.600M19.500 14h3.600" />
            </svg>
            Spreadsheet Server
          </ServerBrand>
          <TitleBlock>
            <Title>INCOME STATEMENT</Title>
            <DateLine>11/30/2007</DateLine>
          </TitleBlock>
          <InsightBrand>
            <InsightTrend width="70" height="22" viewBox="0 0 70 22" fill="none" strokeWidth="1.500">
              <path d="M2 18L23 11.500L44 15" stroke="#0a84cc" />
              <path d="M44 15L66 2" stroke="#38b759" />
              <circle cx="2" cy="18" r="2" fill="#0a84cc" stroke="none" />
              <circle cx="23" cy="11.500" r="2" fill="#0a84cc" stroke="none" />
              <circle cx="44" cy="15" r="2" fill="#38b759" stroke="none" />
              <circle cx="66" cy="2" r="2" fill="#38b759" stroke="none" />
            </InsightTrend>
            <InsightWord>insight</InsightWord>
            <SoftwareWord>software</SoftwareWord>
          </InsightBrand>
        </Banner>
        <Tail n={9} />

        <RowHead $h={28}>10</RowHead>
        <YearValue $fill={GREY}>2007</YearValue>
        <Tail n={10} />

        <RowHead $h={28}>11</RowHead>
        <YearLabel $fill={HEAD_BLUE}>MONTH</YearLabel>
        <Cell $span={7} $rows={2} $fill={ROW_BLUE} />
        <Tail n={11} />

        <RowHead $h={26}>12</RowHead>
        <YearValue $fill={GREY}>11</YearValue>
        <Tail n={12} />

        <RowHead $h={28}>13</RowHead>
        <Cell $fill={HEAD_BLUE} />
        <HeadCell $fill={HEAD_BLUE}>CY - MTD</HeadCell>
        <HeadCell $fill={HEAD_BLUE}>PY-MTD</HeadCell>
        <HeadCell $fill={HEAD_BLUE}>$ VAR</HeadCell>
        <Cell $fill={HEAD_BLUE} />
        <HeadCell $fill={HEAD_BLUE}>CY - YTD</HeadCell>
        <HeadCell $fill={HEAD_BLUE}>PY-YTD</HeadCell>
        <HeadCell $fill={HEAD_BLUE}>$ VAR</HeadCell>
        <Tail n={13} />

        <RowHead $h={23}>14</RowHead>
        <Cell />
        <Cell />
        <Cell />
        <Cell />
        <Cell $rows={21} $fill={GREY} />
        <Cell />
        <Cell />
        <Cell />
        <Tail n={14} />

        {rows.map((row) => (
          <BodyRow key={row.n} row={row} />
        ))}

        <RowHead $h={23} />
        {COLUMNS.slice(0, 8).map((c) => (
          <Cell key={c} $right={GRID} $bottom={GRID} />
        ))}
        <Tail n={36} />
      </Grid>

      <ChartPanel>
        <ChartTitle>TOTAL EXPENSES</ChartTitle>
        <PieSvg width="460" height="370" viewBox="180 30 1380 1110" fill="none">
          <defs>
            <linearGradient id="taxSide" x1="0" x2="1" y1="0" y2="0">
              <stop offset="0" stopColor="#6b769c" />
              <stop offset="1" stopColor="#2b3048" />
            </linearGradient>
          </defs>
          <g style={{ filter: "drop-shadow(0 8px 10px rgba(0,0,0,.4))" }}>
            <path d={`M846 982L${baseArc(PI + 0.0458, PI / 2)}L1500 560Z`} fill="#696750" />
            <path d={`M833 980L${baseArc(PI + 0.067, 1.5 * PI)}L250 560Z`} fill="url(#taxSide)" />
            <path d="M833 980V1072L846 1072V982Z" fill="#20263d" stroke="#d8d8d8" strokeWidth="2" />
          </g>
          {wedges.map((w) => (
            <path key={w.fill} d={w.d} fill={w.fill} stroke="#eaeaea" strokeWidth="2" />
          ))}
        </PieSvg>
        <DataLabel $x={200} $y={142} $w={56} $h={41}>TRAVEL<br />4%</DataLabel>
        <DataLabel $x={52} $y={323} $w={92} $h={41}>TAX EXPENSE<br />45%</DataLabel>
        <DataLabel $x={388} $y={308} $w={63} $h={41}>PAYROLL<br />51%</DataLabel>
        <DataLabel $x={208} $y={532} $w={64} $h={59}>OFFICE<br />EXPENSE<br />0%</DataLabel>
      </ChartPanel>
    </SheetArea>

    <SheetTabs>
      <TabNav>
        <NavArrow $dir="left" />
        <NavArrow $dir="right" />
      </TabNav>
      <SheetTab $active $w={51}>P&amp;L</SheetTab>
      <SheetTab $w={78}>ROLLING</SheetTab>
      <SheetTab $w={98}>INVENTORY</SheetTab>
      <SheetTab $w={75}>OpenPO</SheetTab>
      <SheetTab $w={60}>PARM</SheetTab>
      <AddSheet>
        <svg width="16" height="16" viewBox="0 0 16 16" fill="none" stroke="#777" strokeWidth="1">
          <circle cx="8" cy="8" r="7" />
          <path d="M8 4.500v7M4.500 8h7" strokeWidth="1.500" />
        </svg>
      </AddSheet>
      <TabFiller />
      <ScrollDots>⋮</ScrollDots>
      <HScroll>
        <HScrollBtn>
          <svg width="5" height="8" viewBox="0 0 5 8"><path d="M5 0V8L0 4z" fill="#555" /></svg>
        </HScrollBtn>
        <HScrollTrack />
        <HScrollThumb />
      </HScroll>
    </SheetTabs>
    <StatusBar>
      Ready
      <StatusBox />
    </StatusBar>
  </Page>
);

export default App;
